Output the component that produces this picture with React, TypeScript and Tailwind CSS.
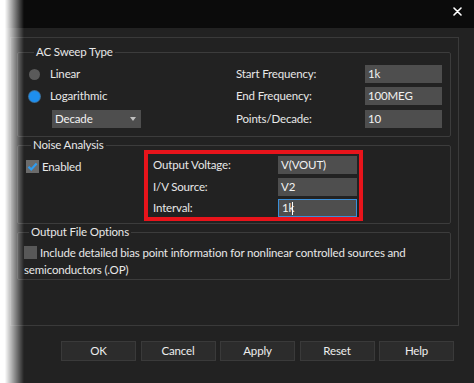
import React from "react";

const font = "font-['Lato','Noto_Sans',sans-serif] text-[11.5px] tracking-[-0.15px]";

function Input({ value, focused }: { value: string; focused?: boolean }) {
  return (
    <div
      className={`relative h-[18px] flex items-center pl-[3px] bg-[#4e4e4e] text-[#f2f2f2] ${
        focused ? "border border-[#3a8fd9] pl-[2px]" : ""
      }`}
    >
      <span>{value}</span>
      {focused && <span className="w-px h-[13px] bg-white ml-[-2px]" />}
    </div>
  );
}

function Button({ label }: { label: string }) {
  return (
    <div className="w-[75px] h-[20px] flex items-center justify-center bg-[#2c2c2c] border border-[#3a3a3a] text-[#eeeeee]">
      {label}
    </div>
  );
}

export default function App() {
  return (
    <div className={`relative w-[474px] h-[383px] overflow-hidden bg-[#222222] text-[#e8e8e8] ${font}`}>
      {/* title bar */}
      <div className="h-[28px] bg-[#0b0b0b] flex justify-end items-start pr-[12px] pt-[7px]">
        <svg width="9" height="9" viewBox="0 0 9 9">
          <path d="M1 1 L8 8 M8 1 L1 8" stroke="#ffffff" strokeWidth="1.6" strokeLinecap="round" />
        </svg>
      </div>

      {/* body */}
      <div className="pt-[9px] pl-[10px] pr-[15px]">
        <div className="h-[289px] border border-[#3a3a3a] pl-[6px] pr-[7px] pt-[6px]">
          {/* AC Sweep Type */}
          <fieldset className="border border-[#3c3c3c] rounded-[2px] pl-[11px] pr-[7px] pt-[5px] pb-[8px]">
            <legend className="ml-[5px] px-[2px] leading-[16px] text-[#e8e8e8]">AC Sweep Type</legend>
            <div className="flex">
              <div className="w-[207px] flex flex-col">
                <div className="h-[18px] flex items-center">
                  <span className="w-[11px] h-[11px] rounded-full bg-[#5a5a5a]" />
                  <span className="ml-[10px]">Linear</span>
                </div>
                <div className="h-[18px] mt-[4px] flex items-center">
                  <span className="w-[11px] h-[11px] rounded-full bg-[#1e8fef] shadow-[0_0_0_1px_#3b6f9a]" />
                  <span className="ml-[10px]">Logarithmic</span>
                </div>
                <div className="h-[18px] mt-[5px] ml-[23px] w-[89px] bg-[#4e4e4e] flex items-center justify-between pl-[3px] pr-[5px]">
                  <span className="text-[#f2f2f2]">Decade</span>
                  <svg width="6" height="4" viewBox="0 0 6 4">
                    <path d="M0 0 L6 0 L3 4 Z" fill="#c0c0c0" />
                  </svg>
                </div>
              </div>
              <div className="flex flex-col">
                {[
                  ["Start Frequency:", "1k", "mt-0"],
                  ["End Frequency:", "100MEG", "mt-[4px]"],
                  ["Points/Decade:", "10", "mt-[5px]"],
                ].map(([l, v, m]) => (
                  <div key={l} className={`flex items-center ${m}`}>
                    <span className="w-[129px]">{l}</span>
                    <div className="w-[77px]">
                      <Input value={v} />
                    </div>
                  </div>
                ))}
              </div>
            </div>
          </fieldset>

          {/* Noise Analysis */}
          <fieldset className="border border-[#3c3c3c] rounded-[2px] pl-[8px] pt-[3px] pb-[6px]">
            <legend className="ml-[5px] px-[2px] leading-[16px]">Noise Analysis</legend>
            <div className="flex">
              <div className="w-[127px] pt-[2px]">
                <div className="flex items-center">
                  <svg width="13" height="13" viewBox="0 0 13 13">
                    <rect x="0" y="0" width="13" height="13" fill="#6b6b6b" />
                    <path d="M2.5 6.8 L5.2 9.4 L10.6 3.4" stroke="#2f9cf0" strokeWidth="2.2" fill="none" />
                  </svg>
                  <span className="ml-[3px]">Enabled</span>
                </div>
              </div>
              <div className="flex flex-col">
                {[
                  ["Output Voltage:", "V(VOUT)", "mt-0", false],
                  ["I/V Source:", "V2", "mt-[4px]", false],
                  ["Interval:", "1k", "mt-[3px]", true],
                ].map(([l, v, m, f]) => (
                  <div key={l as string} className={`flex items-center ${m}`}>
                    <span className="w-[125px]">{l as string}</span>
                    <div className="w-[79px]">
                      <Input value={v as string} focused={f as boolean} />
                    </div>
                  </div>
                ))}
              </div>
            </div>
          </fieldset>

          {/* Output File Options */}
          <fieldset className="border border-[#3c3c3c] rounded-[2px] pl-[6px] pr-[6px] pt-[4px] pb-px">
            <legend className="ml-[5px] px-[2px] leading-[16px]">Output File Options</legend>
            <p className="leading-[17px]">
              <span className="inline-block w-[13px] h-[13px] bg-[#585858] align-[-2px] mr-[3px]" />
              Include detailed bias point information for nonlinear controlled sources and semiconductors (.OP)
            </p>
          </fieldset>
        </div>

        {/* buttons */}
        <div className="flex justify-end gap-[4.5px] mt-[15px] mr-[5px]">
          <Button label="OK" />
          <Button label="Cancel" />
          <Button label="Apply" />
          <Button label="Reset" />
          <Button label="Help" />
        </div>
      </div>

      {/* red annotation box */}
      <div className="absolute left-[144px] top-[150px] w-[219px] h-[71px] border-[4px] border-[#e8141b]" />

      {/* left shadow */}
      <div className="absolute left-0 top-0 bottom-0 w-[24px] bg-gradient-to-r from-white from-[20%] to-transparent" />
    </div>
  );
}
